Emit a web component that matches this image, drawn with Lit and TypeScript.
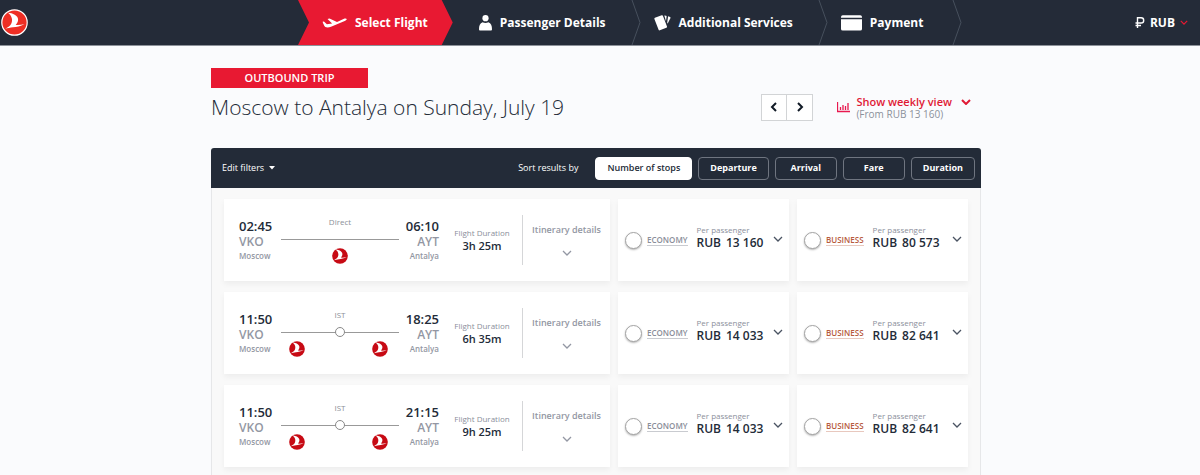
import { LitElement, html, css, svg } from "lit";
import { customElement, property, state } from "lit/decorators.js";

interface Fare {
  cabin: "economy" | "business";
  price: string;
}

interface Flight {
  id: string;
  depart: string;
  arrive: string;
  stop: string;
  duration: string;
  fares: Fare[];
}

const FLIGHTS: Flight[] = [
  { id: "f1", depart: "02:45", arrive: "06:10", stop: "", duration: "3h 25m",
    fares: [{ cabin: "economy", price: "13 160" }, { cabin: "business", price: "80 573" }] },
  { id: "f2", depart: "11:50", arrive: "18:25", stop: "IST", duration: "6h 35m",
    fares: [{ cabin: "economy", price: "14 033" }, { cabin: "business", price: "82 641" }] },
  { id: "f3", depart: "11:50", arrive: "21:15", stop: "IST", duration: "9h 25m",
    fares: [{ cabin: "economy", price: "14 033" }, { cabin: "business", price: "82 641" }] },
];

const BIRD = svg`<path fill="#fff" d="M5.500 2.200C10 2.400 15.600 5 15.600 9c0 2.500-1.100 4-2.400 5.400 3.300.2 6.300-.2 8.800-.9-4 2.500-8 2.900-11.500 3.200-3 .3-5.500.9-7.700 1.600 2.200-1.300 4.700-2.500 5.800-4.800C10.600 9.500 9.500 5.500 5.500 2.200z"/>`;

const chevron = (cls: string) => html`<svg class=${cls} viewBox="0 0 10 6" aria-hidden="true">
  <path d="M1 1l4 4 4-4" fill="none" stroke="currentColor" /></svg>`;

@customElement("airline-mark")
class AirlineMark extends LitElement {
  static styles = css`
    :host { display: block; width: 16px; height: 16px; }
    .mark { display: block; width: 100%; height: 100%; }
  `;
  render() {
    return html`<svg class="mark" viewBox="0 0 24 24" aria-hidden="true">
      <circle cx="12" cy="12" r="11.700" fill="#c70a14" />${BIRD}</svg>`;
  }
}

@customElement("flight-row")
class FlightRow extends LitElement {
  @property({ attribute: false }) flight!: Flight;

  static styles = css`
    :host {
      display: grid;
      grid-template-columns: minmax(0, 1fr) 171px 171px;
      gap: 8px;
    }
    .card {
      background: #fff;
      box-shadow: 0 3px 6px rgba(0, 0, 0, 0.05);
      display: flex;
      align-items: center;
      height: 82px;
      box-sizing: border-box;
    }
    .leg { padding-left: 15px; }
    .place { display: grid; width: 34px; color: #9397a3; }
    .place.to { text-align: right; justify-items: end; width: 40px; }
    .time { font-size: 13px; line-height: 16px; font-weight: 600; color: #232b38; }
    .code { font-size: 12px; line-height: 16px; font-weight: 600; }
    .city { font-size: 8px; line-height: 12px; font-weight: 600; }
    .route { flex: 1; margin-left: 8px; display: grid; justify-items: center; color: #8b8f98; }
    .via { font-size: 8px; line-height: 12px; }
    .track { height: 12px; width: 100%; margin: 5px 0 3px; display: grid; place-items: center;
      background: linear-gradient(#999, #999) center / 100% 1px no-repeat; }
    .dot { width: 8px; height: 8px; border: 1px solid #888; border-radius: 50%; background: #fff; }
    .marks { display: flex; justify-content: space-around; width: 100%; }
    .marks.two { justify-content: space-between; padding: 0 11px 0 8px; box-sizing: border-box; }
    .duration { width: 52px; margin-left: 17px; text-align: center; display: grid; white-space: nowrap; justify-content: center; }
    .note { font-size: 8px; line-height: 12px; color: #8b8f9b; }
    .length { font-size: 11px; line-height: 14px; font-weight: 600; color: #232b38; }
    .details {
      width: 88px; height: 50px; margin-left: 14px; padding: 0;
      border: 0; border-left: 1px solid #d5d6d8; background: none;
      font: 600 9px/12px "Open Sans", sans-serif; color: #9397a3;
      display: flex; flex-direction: column; align-items: center; justify-content: center; gap: 14px;
      white-space: nowrap;
    }
    .arrow { width: 10px; height: 6px; display: block; stroke-width: 1.3; }
    .fare { padding: 0 4px 0 7px; }
    .pick { display: flex; align-items: center; }
    .radio {
      appearance: none; margin: 0; width: 17px; height: 17px; box-sizing: border-box;
      border: 1px solid #a4a4a4; border-radius: 50%; background: #fff;
      box-shadow: 0 1px 2px rgba(0, 0, 0, 0.3);
    }
    .radio:checked { background: #e81932; }
    .cabin { font-size: 8px; line-height: 11px; font-weight: 600; margin-left: 5px; color: #8a8e99; border-bottom: 1px solid #c9cbd0; text-transform: uppercase; }
    .business .cabin { color: #b75b3e; border-color: #e8c8be; }
    .price { display: grid; margin-left: 9px; padding-bottom: 6px; white-space: nowrap; }
    .amount { display: flex; gap: 5px; font-size: 12px; line-height: 14px; font-weight: 600; color: #232b38; }
    .expand { margin: 0 0 2px auto; padding: 0; border: 0; background: none; color: #4a5362; width: 12px; }
  `;

  render() {
    const f = this.flight;
    return html`
      <section class="card leg">
        <div class="place">
          <span class="time">${f.depart}</span><span class="code">VKO</span><span class="city">Moscow</span>
        </div>
        <div class="route">
          <span class="via">${f.stop || "Direct"}</span>
          <div class="track">${f.stop ? html`<span class="dot"></span>` : null}</div>
          <div class="marks ${f.stop ? "two" : ""}">
            <airline-mark></airline-mark>${f.stop ? html`<airline-mark></airline-mark>` : null}
          </div>
        </div>
        <div class="place to">
          <span class="time">${f.arrive}</span><span class="code">AYT</span><span class="city">Antalya</span>
        </div>
        <div class="duration"><span class="note">Flight Duration</span><span class="length">${f.duration}</span></div>
        <button class="details">Itinerary details ${chevron("arrow")}</button>
      </section>
      ${f.fares.map((fare) => html`
        <section class="card fare ${fare.cabin}">
          <label class="pick">
            <input class="radio" type="radio" name="fare" />
            <span class="cabin">${fare.cabin}</span>
            <span class="price"><span class="note">Per passenger</span><span class="amount"><span>RUB</span> <span>${fare.price}</span></span></span>
          </label>
          <button class="expand" aria-label="Show ${fare.cabin} fares">${chevron("arrow")}</button>
        </section>`)}
    `;
  }
}

@customElement("app-root")
class AppRoot extends LitElement {
  @state() private sort = "Number of stops";

  static styles = css`
    :host {
      display: block; height: 100vh; overflow: hidden; background: #fafbfd;
      font-family: "Open Sans", sans-serif; color: #232b38;
    }
    button { font-family: inherit; }
    .bar { display: flex; align-items: center; height: 45px; background: #242b38; padding: 0 12px 0 1px; border-bottom: 1px solid #8d929a; }
    .logo { width: 27px; height: 27px; display: block; }
    .steps { display: flex; align-self: stretch; margin: 0 auto 0 270px; padding: 0; list-style: none; }
    .step { display: flex; align-items: center; position: relative; }
    .link { display: flex; align-items: center; gap: 8px; height: 100%; color: #fff; text-decoration: none; font-size: 12px; line-height: 16px; font-weight: 700; white-space: nowrap; padding: 0 26px 0 37px; }
    .active .link { padding: 0 14px 0 24px; }
    .pay .link { padding: 0 30px 0 22px; }
    .extras .link { padding: 0 26px 0 22px; }
    .active { background: #e81932; clip-path: polygon(0 0, calc(100% - 11px) 0, 100% 50%, calc(100% - 11px) 100%, 0 100%, 11px 50%); padding-right: 11px; margin-right: -11px; }
    .edge { position: absolute; right: -9px; top: 0; height: 100%; width: 10px; }
    .glyph { display: block; flex: none; }
    .currency { display: flex; align-items: center; gap: 5px; padding: 0; border: 0; background: none; color: #fff; font-size: 12px; line-height: 16px; font-weight: 700; }
    .tick { width: 8px; height: 5px; color: #e81932; stroke-width: 1.5; }
    .page { max-width: 770px; margin: 0 auto; padding: 22px 8px 0 0; }
    .tag { background: #e81932; color: #fff; font-size: 11px; line-height: 20px; font-weight: 600; width: 157px; text-align: center; }
    .head { display: flex; align-items: center; height: 38px; }
    .title { margin: 0 auto 0 0; font: 300 21px/28px "Open Sans", sans-serif; white-space: nowrap; }
    .pager { display: flex; }
    .turn { width: 26px; height: 27px; padding: 0; border: 1px solid #d2d4d6; background: #fff; display: grid; place-items: center; }
    .turn + .turn { border-left: 0; }
    .weekly { display: flex; align-items: center; margin: 0 10px 0 24px; padding: 0; border: 0; background: none; text-align: left; color: #e01a35; font-size: 11px; line-height: 13px; font-weight: 600; white-space: nowrap; gap: 6px; }
    .from { display: block; color: #8b919b; font-size: 10px; line-height: 12px; font-weight: 400; }
    .drop { width: 10px; height: 6px; align-self: flex-start; margin: 4px 0 0 3px; stroke-width: 2; }
    .panel { margin-top: 22px; }
    .tools { display: flex; align-items: center; height: 40px; padding: 0 6px 0 11px; background: #232b38; border-radius: 3px 3px 0 0; gap: 6px; color: #fff; }
    .filters { margin-right: auto; display: flex; align-items: center; gap: 5px; padding: 0; border: 0; background: none; color: #fff; font-size: 9px; line-height: 12px; }
    .label { font-size: 9px; line-height: 12px; margin-right: 11px; }
    .sort { height: 23px; min-width: 62px; padding: 0 11px; border: 1px solid #6f7580; border-radius: 4px; background: none; color: #fff; font-size: 9px; line-height: 12px; font-weight: 700; }
    .sort.on { background: #fff; border-color: #fff; color: #232b38; font-weight: 600; }
    .list { display: grid; gap: 11px; padding: 11px 12px; background: #f9f9f9; border: 1px solid #e6e7e9; border-top: 0; }
  `;

  private step(label: string, cls: string, icon: unknown) {
    return html`<li class="step ${cls}">
      <a class="link" href="#">${icon}${label}</a>
      ${cls === "active" ? null : html`<svg class="edge" viewBox="0 0 10 45" preserveAspectRatio="none" aria-hidden="true">
        <path d="M1 0l8 22.500L1 45" fill="none" stroke="#47505d" /></svg>`}
    </li>`;
  }

  render() {
    return html`
      <header class="bar">
        <svg class="logo" viewBox="0 0 27 27" role="img" aria-label="Airline logo">
          <circle cx="13.500" cy="13.500" r="12.700" fill="#ee2e24" stroke="#fff" stroke-width="1.200" />
          <g transform="translate(1.500 1.500)">${BIRD}</g>
        </svg>
        <ol class="steps">
          ${this.step("Select Flight", "active", html`<svg class="glyph" width="25" height="12" viewBox="0 0 25 12" aria-hidden="true">
            <path fill="#fff" d="M.6 4.800l1.300-.4 3 2.800 5.200-.7L5.500 2l2-.5 7.500 3.400 6.500-3c1.600-.6 3-.5 3.200.1.200.7-.6 1.400-2 2L9 9.800c-2 .7-4.300.8-5.700.2C2 9 1.200 6.500.6 4.800z"/></svg>`)}
          ${this.step("Passenger Details", "", html`<svg class="glyph" width="13" height="16" viewBox="0 0 13 16" aria-hidden="true">
            <circle cx="6.500" cy="3.200" r="3.100" fill="#fff"/><path fill="#fff" d="M3.600 7.200c1.800 1 4 1 5.800 0C12 8 13 10.500 13 14.300c0 .8-.5 1.200-1.200 1.200H1.200C.5 15.500 0 15.100 0 14.300 0 10.500 1 8 3.600 7.200z"/></svg>`)}
          ${this.step("Additional Services", "extras", html`<svg class="glyph" width="17" height="16" viewBox="0 0 17 16" aria-hidden="true">
            <path fill="#fff" d="M.9 2.700L7.700.3c.6-.2 1 0 1.200.5l4.100 10.800c.2.600 0 1-.6 1.200L5.800 15.300c-.6.200-1 0-1.200-.5L.4 4C.2 3.300.4 2.900.9 2.700z"/><path fill="#fff" d="M10.300.4l1.800.3c.4.1.6.3.5.7L12 6.300zM14.100 1.300l2 .8c.4.200.5.500.4.900L13.600 8.800l-.4-1.200z"/></svg>`)}
          ${this.step("Payment", "pay", html`<svg class="glyph" width="21" height="16" viewBox="0 0 21 16" aria-hidden="true">
            <path fill="#fff" d="M0 2.800V2Q0 .2 1.800.2h17.400Q21 .2 21 2v.8zM0 4.300h21V14q0 1.600-1.800 1.600H1.800Q0 15.600 0 14z"/></svg>`)}
        </ol>
        <button class="currency"><svg class="glyph" width="10" height="14" viewBox="0 0 10 14" aria-hidden="true">
          <path d="M2.500 12V1.800h3.600a2.600 2.600 0 010 5.200H.5M.5 9.500H6" fill="none" stroke="#fff" stroke-width="1.400"/></svg>RUB ${chevron("tick")}</button>
      </header>
      <main class="page">
        <div class="tag">OUTBOUND TRIP</div>
        <div class="head">
          <h1 class="title">Moscow to Antalya on Sunday, July 19</h1>
          <div class="pager">
            <button class="turn" aria-label="Previous day"><svg width="8" height="10" viewBox="0 0 8 10"><path d="M6 1L2 5l4 4" fill="none" stroke="#111a26" stroke-width="2"/></svg></button>
            <button class="turn" aria-label="Next day"><svg width="8" height="10" viewBox="0 0 8 10"><path d="M2 1l4 4-4 4" fill="none" stroke="#111a26" stroke-width="2"/></svg></button>
          </div>
          <button class="weekly">
            <svg class="glyph" width="13" height="11" viewBox="0 0 13 11" aria-hidden="true"><path d="M.5 0v9.500H13M3.500 8V5M6 8V3M8.500 8V4M11 8V1" fill="none" stroke="#e8194f" stroke-width="1.300"/></svg>
            <span>Show weekly view<span class="from">(From RUB 13 160)</span></span>
            ${chevron("drop")}
          </button>
        </div>
        <section class="panel">
          <div class="tools">
            <button class="filters">Edit filters <svg width="6" height="4" viewBox="0 0 6 4" aria-hidden="true"><path d="M0 0h6L3 3.500z" fill="#fff"/></svg></button>
            <span class="label">Sort results by</span>
            ${["Number of stops", "Departure", "Arrival", "Fare", "Duration"].map((s) => html`
              <button class="sort ${s === this.sort ? "on" : ""}" @click=${() => (this.sort = s)}>${s}</button>`)}
          </div>
          <div class="list">${FLIGHTS.map((f) => html`<flight-row .flight=${f}></flight-row>`)}</div>
        </section>
      </main>
    `;
  }
}
